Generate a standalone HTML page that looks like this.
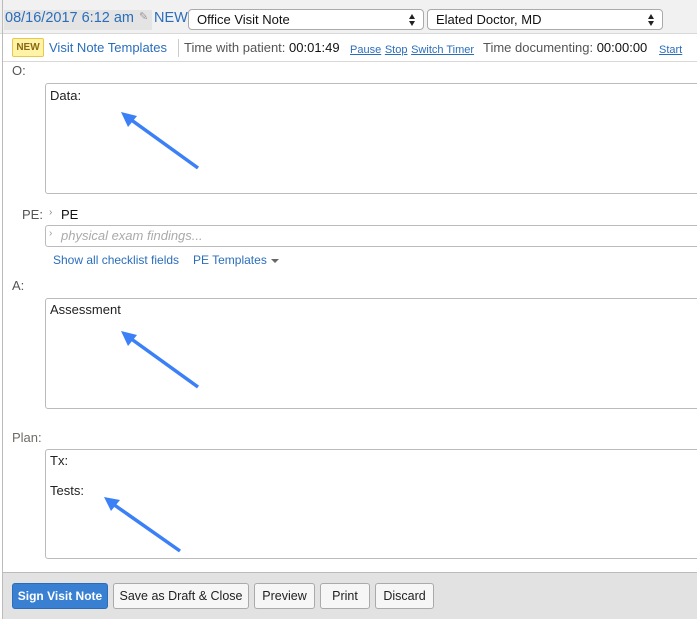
<!DOCTYPE html>
<html><head><meta charset="utf-8"><style>
*{box-sizing:border-box;margin:0;padding:0}
body{width:697px;height:619px;overflow:hidden;background:#fff;font-family:"Liberation Sans",Arial,sans-serif;font-size:13px;color:#222;position:relative}
.abs{position:absolute}
.top{left:0;top:0;width:697px;height:34px;background:#f1f1f1;border-bottom:1px solid #d8d8d8}
.lb{left:2px;top:0;width:1px;height:619px;background:#bbb}
.sel{position:absolute;height:21px;border:1px solid #aaa;border-radius:4px;background:#fff;font-size:13px;padding:2px 0 0 8px;color:#111}
.sel:after{content:"";position:absolute;right:8px;top:4px;border-left:3.5px solid transparent;border-right:3.5px solid transparent;border-bottom:5px solid #222}
.sel:before{content:"";position:absolute;right:8px;top:11px;border-left:3.5px solid transparent;border-right:3.5px solid transparent;border-top:5px solid #222}
.row2{left:3px;top:34px;width:694px;height:28px;border-bottom:1px solid #d8d8d8}
a{color:#2a6ebb;text-decoration:underline;font-size:11px}
.box{position:absolute;left:45px;width:660px;border:1px solid #bbb;border-radius:3px;background:#fff}
.lbl{position:absolute;color:#555;font-size:13px}
.btn{position:absolute;top:583px;height:26px;border:1px solid #aaa;border-radius:3px;background:#f6f6f6;font-size:12.5px;color:#222;text-align:center;padding-top:5px}
</style></head><body>
<div class="abs top"></div>
<div class="abs" style="left:4px;top:10px;width:148px;height:20px;background:#e4e4e4"></div>
<div class="abs" style="left:5px;top:10px;font-size:14.5px;color:#2a6ebb">08/16/2017 6:12 am</div>
<div class="abs" style="left:139px;top:10px;font-size:11px;color:#999">✎</div>
<div class="abs" style="left:154px;top:10px;font-size:14.5px;color:#2a6ebb">NEW</div>
<div class="sel" style="left:188px;top:9px;width:236px">Office Visit Note</div>
<div class="sel" style="left:427px;top:9px;width:236px">Elated Doctor, MD</div>
<div class="abs lb"></div>
<div class="abs row2"></div>
<div class="abs" style="left:12px;top:38px;width:32px;height:19px;background:#fff3a8;border:1px solid #e8c84a;border-radius:2px;font-size:10px;font-weight:bold;color:#8a6a10;text-align:center;padding-top:3px">NEW</div>
<div class="abs" style="left:49px;top:40px;font-size:13px;color:#2a6ebb">Visit Note Templates</div>
<div class="abs" style="left:178px;top:39px;width:1px;height:18px;background:#ccc"></div>
<div class="abs" style="left:184px;top:40px;font-size:13px;color:#555">Time with patient: <span style="color:#111">00:01:49</span></div>
<div class="abs" style="left:350px;top:41px"><a>Pause</a> <a>Stop</a> <a>Switch Timer</a></div>
<div class="abs" style="left:483px;top:40px;font-size:13px;color:#555">Time documenting: <span style="color:#111">00:00:00</span></div>
<div class="abs" style="left:659px;top:41px"><a>Start</a></div>

<div class="lbl" style="left:12px;top:63px">O:</div>
<div class="box" style="top:83px;height:111px"></div>
<div class="abs" style="left:50px;top:88px">Data:</div>

<div class="lbl" style="left:22px;top:207px">PE:</div>
<div class="abs" style="left:49px;top:207px;font-size:10px;color:#888">›</div>
<div class="abs" style="left:61px;top:207px;color:#111">PE</div>
<div class="box" style="top:225px;height:22px"></div>
<div class="abs" style="left:49px;top:228px;font-size:10px;color:#999">›</div>
<div class="abs" style="left:61px;top:228px;color:#aaa;font-style:italic">physical exam findings...</div>
<div class="abs" style="left:53px;top:253px;font-size:12px;color:#2a6ebb">Show all checklist fields</div>
<div class="abs" style="left:193px;top:253px;font-size:12px;color:#2a6ebb">PE Templates</div>
<div class="abs" style="left:271px;top:259px;border-left:4px solid transparent;border-right:4px solid transparent;border-top:4px solid #666"></div>

<div class="lbl" style="left:12px;top:278px">A:</div>
<div class="box" style="top:298px;height:111px"></div>
<div class="abs" style="left:50px;top:302px">Assessment</div>

<div class="lbl" style="left:12px;top:430px;color:#6f6a66">Plan:</div>
<div class="box" style="top:449px;height:110px"></div>
<div class="abs" style="left:50px;top:453px">Tx:</div>
<div class="abs" style="left:50px;top:483px">Tests:</div>

<svg class="abs" style="left:0;top:0" width="697" height="619">
<g stroke="#3b80f6" stroke-width="3.5" fill="#3b80f6">
<line x1="198" y1="168" x2="130" y2="119"/><polygon stroke="none" points="121,112 137,116 128,127"/>
<line x1="198" y1="387" x2="130" y2="338"/><polygon stroke="none" points="121,331 137,335 128,346"/>
<line x1="180" y1="551" x2="113" y2="504"/><polygon stroke="none" points="104,497 120,500 111,511"/>
</g></svg>

<div class="abs" style="left:3px;top:572px;width:694px;height:47px;background:#e2e2e2;border-top:1px solid #bbb"></div>
<div class="btn" style="left:12px;width:96px;background:#3a80d2;border-color:#2c6cb8;color:#fff;font-weight:bold;font-size:12px">Sign Visit Note</div>
<div class="btn" style="left:113px;width:136px">Save as Draft &amp; Close</div>
<div class="btn" style="left:254px;width:61px">Preview</div>
<div class="btn" style="left:320px;width:50px">Print</div>
<div class="btn" style="left:375px;width:59px">Discard</div>
</body></html>
